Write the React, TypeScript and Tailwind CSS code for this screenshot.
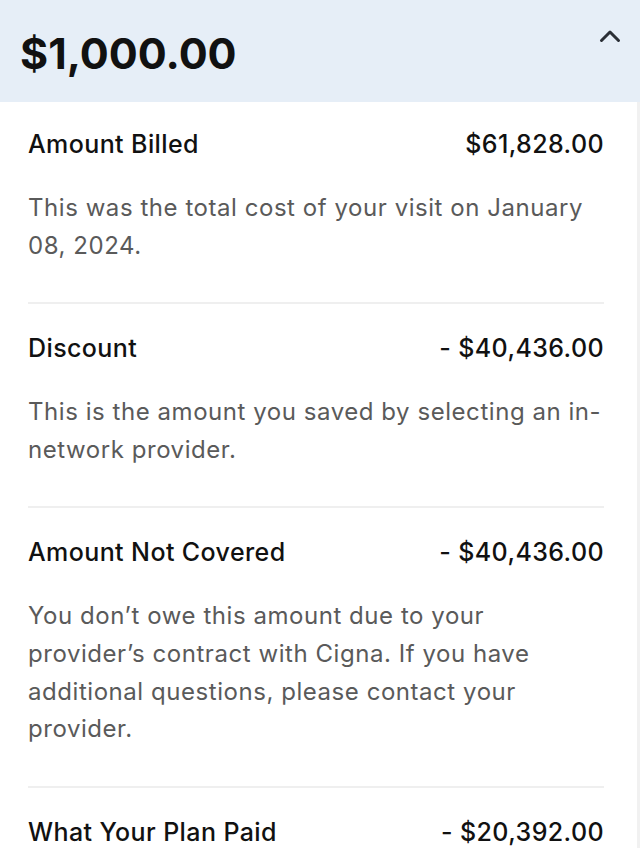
import { ReactNode } from 'react';

type Item = {
  label: string;
  amount: string;
  note?: ReactNode;
};

const items: Item[] = [
  {
    label: 'Amount Billed',
    amount: '$61,828.00',
    note: 'This was the total cost of your visit on January 08, 2024.',
  },
  {
    label: 'Discount',
    amount: '- $40,436.00',
    note: 'This is the amount you saved by selecting an in-network provider.',
  },
  {
    label: 'Amount Not Covered',
    amount: '- $40,436.00',
    note: 'You don\u2019t owe this amount due to your provider\u2019s contract with Cigna. If you have additional questions, please contact your provider.',
  },
  {
    label: 'What Your Plan Paid',
    amount: '- $20,392.00',
  },
];

function ChevronUp() {
  return (
    <svg width="24" height="16" viewBox="0 0 24 16" fill="none" className="text-[#2b2f36]">
      <path d="M3.5 12.5 L12 4 L20.5 12.5" stroke="currentColor" strokeWidth="3" strokeLinecap="round" strokeLinejoin="round" />
    </svg>
  );
}

export default function App() {
  return (
    <div className="min-h-screen bg-white font-['Inter','Liberation_Sans',sans-serif] text-[#111]">
      {/* header */}
      <div className="h-[102px] bg-[#e6eef7] flex items-center justify-between pl-5 pr-[18px]">
        <h1 className="text-[43px] font-bold text-[#111] pt-1">$1,000.00</h1>
        <div className="-mt-[30px]">
          <ChevronUp />
        </div>
      </div>

      <div className="border-r-[3px] border-[#f1f1f1] px-7 pr-[33px]">
        {items.map((item, i) => (
          <div
            key={item.label}
            className={i > 0 ? 'border-t-2 border-[#efefef]' : ''}
          >
            <div
              className={`flex justify-between items-center text-[25px] font-medium tracking-[0.4px] leading-8 ${
                i === 0 ? 'pt-[26px]' : 'pt-[28px]'
              }`}
            >
              <span>{item.label}</span>
              <span>{item.amount}</span>
            </div>
            {item.note && (
              <p className="mt-[29px] mb-[38px] text-[24px] tracking-[0.55px] leading-[37.6px] text-[#5a5a5a]">
                {item.note}
              </p>
            )}
          </div>
        ))}
      </div>
    </div>
  );
}
